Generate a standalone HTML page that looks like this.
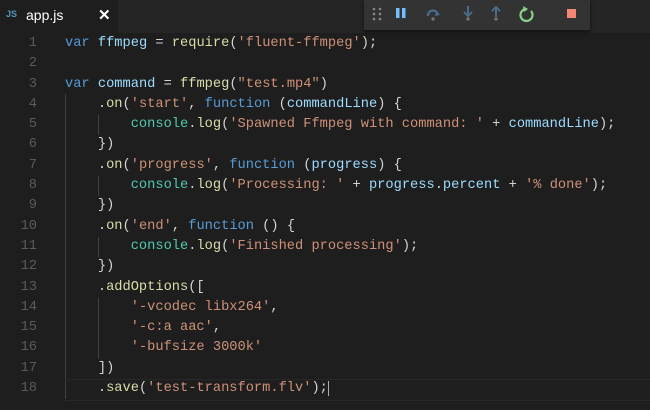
<!DOCTYPE html>
<html><head><meta charset="utf-8"><style>
body{margin:0;width:650px;height:410px;background:#1e1e1e;overflow:hidden;position:relative;font-family:"Liberation Sans",sans-serif}
.tabbar{position:absolute;left:0;top:0;width:650px;height:33px;background:#252526}
.tab{position:absolute;left:0;top:0;width:118px;height:33px;background:#1e1e1e}
.tab .js{position:absolute;left:6px;top:9px;font-size:9px;color:#519aba;font-weight:bold}
.tab .nm{position:absolute;left:26px;top:7px;font-size:14px;color:#fff}
.tab .x{position:absolute;left:98px;top:6px;font-size:15px;color:#fff;font-weight:bold}
.tb{position:absolute;left:364px;top:0;width:226px;height:30px;background:#333333;box-shadow:0 2px 4px rgba(0,0,0,.6)}
.code{position:absolute;left:0;top:34px;font-family:"Liberation Mono",monospace;font-size:13.7px}
.l{height:20.3px;line-height:20.3px;white-space:pre;position:relative}
.n{display:inline-block;width:37px;text-align:right;color:#5a5a5a}
.t{position:absolute;left:65px;top:0;color:#d4d4d4}
.k{color:#569cd6}.v{color:#9cdcfe}.f{color:#dcdcaa}.s{color:#ce9178}.c{color:#4ec9b0}
.g{position:absolute;width:1px;background:#404040}
</style></head><body>
<div class="tabbar"><div class="tab"><span class="js">JS</span><span class="nm">app.js</span><span class="x">✕</span></div></div>
<div class="tb">
<svg width="226" height="30" viewBox="0 0 226 30">
<g fill="#888"><circle cx="10" cy="9" r="1.3"/><circle cx="16" cy="9" r="1.3"/><circle cx="10" cy="14" r="1.3"/><circle cx="16" cy="14" r="1.3"/><circle cx="10" cy="19" r="1.3"/><circle cx="16" cy="19" r="1.3"/></g>
<rect x="32" y="8" width="3.5" height="10" fill="#75beff"/><rect x="38" y="8" width="3.5" height="10" fill="#75beff"/>
<path d="M64 16 a5 5 0 0 1 10 -1" stroke="#4a6c8c" stroke-width="2.2" fill="none"/><path d="M72 11 l4 4 l-5 1z" fill="#4a6c8c"/><circle cx="69" cy="19" r="1.6" fill="#777"/>
<path d="M104 6 v9" stroke="#4a6c8c" stroke-width="2"/><path d="M100 12 l4 4 l4 -4" stroke="#4a6c8c" stroke-width="2" fill="none"/><circle cx="104" cy="19" r="1.6" fill="#777"/>
<path d="M132 8 v9" stroke="#4a6c8c" stroke-width="2"/><path d="M128 11 l4 -4 l4 4" stroke="#4a6c8c" stroke-width="2" fill="none"/><circle cx="132" cy="19" r="1.6" fill="#777"/>
<path d="M162 9 a6 6 0 1 0 5 2" stroke="#89d185" stroke-width="2.2" fill="none"/><path d="M159 6 l5 3 l-4 3z" fill="#89d185"/>
<rect x="203" y="9" width="9" height="9" fill="#f48771"/>
</svg></div>
<div class="g" style="left:98px;top:115px;height:20px"></div>
<div class="g" style="left:98px;top:176px;height:20px"></div>
<div class="g" style="left:98px;top:237px;height:20px"></div>
<div class="g" style="left:98px;top:298px;height:61px"></div>
<div class="g" style="left:65px;top:94px;height:305px"></div>
<div style="position:absolute;left:65px;top:379px;width:585px;height:20px;border-top:1px solid #282828;border-bottom:1px solid #282828"></div>
<div class="code">
<div class="l"><span class="n">1</span><span class="t"><span class="k">var</span> <span class="v">ffmpeg</span> = <span class="f">require</span>(<span class="s">'fluent-ffmpeg'</span>);</span></div>
<div class="l"><span class="n">2</span></div>
<div class="l"><span class="n">3</span><span class="t"><span class="k">var</span> <span class="v">command</span> = <span class="f">ffmpeg</span>(<span class="s">"test.mp4"</span>)</span></div>
<div class="l"><span class="n">4</span><span class="t">    .<span class="f">on</span>(<span class="s">'start'</span>, <span class="k">function</span> (<span class="v">commandLine</span>) {</span></div>
<div class="l"><span class="n">5</span><span class="t">        <span class="c">console</span>.<span class="f">log</span>(<span class="s">'Spawned Ffmpeg with command: '</span> + <span class="v">commandLine</span>);</span></div>
<div class="l"><span class="n">6</span><span class="t">    })</span></div>
<div class="l"><span class="n">7</span><span class="t">    .<span class="f">on</span>(<span class="s">'progress'</span>, <span class="k">function</span> (<span class="v">progress</span>) {</span></div>
<div class="l"><span class="n">8</span><span class="t">        <span class="c">console</span>.<span class="f">log</span>(<span class="s">'Processing: '</span> + <span class="v">progress</span>.<span class="v">percent</span> + <span class="s">'% done'</span>);</span></div>
<div class="l"><span class="n">9</span><span class="t">    })</span></div>
<div class="l"><span class="n">10</span><span class="t">    .<span class="f">on</span>(<span class="s">'end'</span>, <span class="k">function</span> () {</span></div>
<div class="l"><span class="n">11</span><span class="t">        <span class="c">console</span>.<span class="f">log</span>(<span class="s">'Finished processing'</span>);</span></div>
<div class="l"><span class="n">12</span><span class="t">    })</span></div>
<div class="l"><span class="n">13</span><span class="t">    .<span class="f">addOptions</span>([</span></div>
<div class="l"><span class="n">14</span><span class="t">        <span class="s">'-vcodec libx264'</span>,</span></div>
<div class="l"><span class="n">15</span><span class="t">        <span class="s">'-c:a aac'</span>,</span></div>
<div class="l"><span class="n">16</span><span class="t">        <span class="s">'-bufsize 3000k'</span></span></div>
<div class="l"><span class="n">17</span><span class="t">    ])</span></div>
<div class="l"><span class="n">18</span><span class="t">    .<span class="f">save</span>(<span class="s">'test-transform.flv'</span>);<span style="border-left:1px solid #aeafad"></span></span></div>
</div>
</body></html>
